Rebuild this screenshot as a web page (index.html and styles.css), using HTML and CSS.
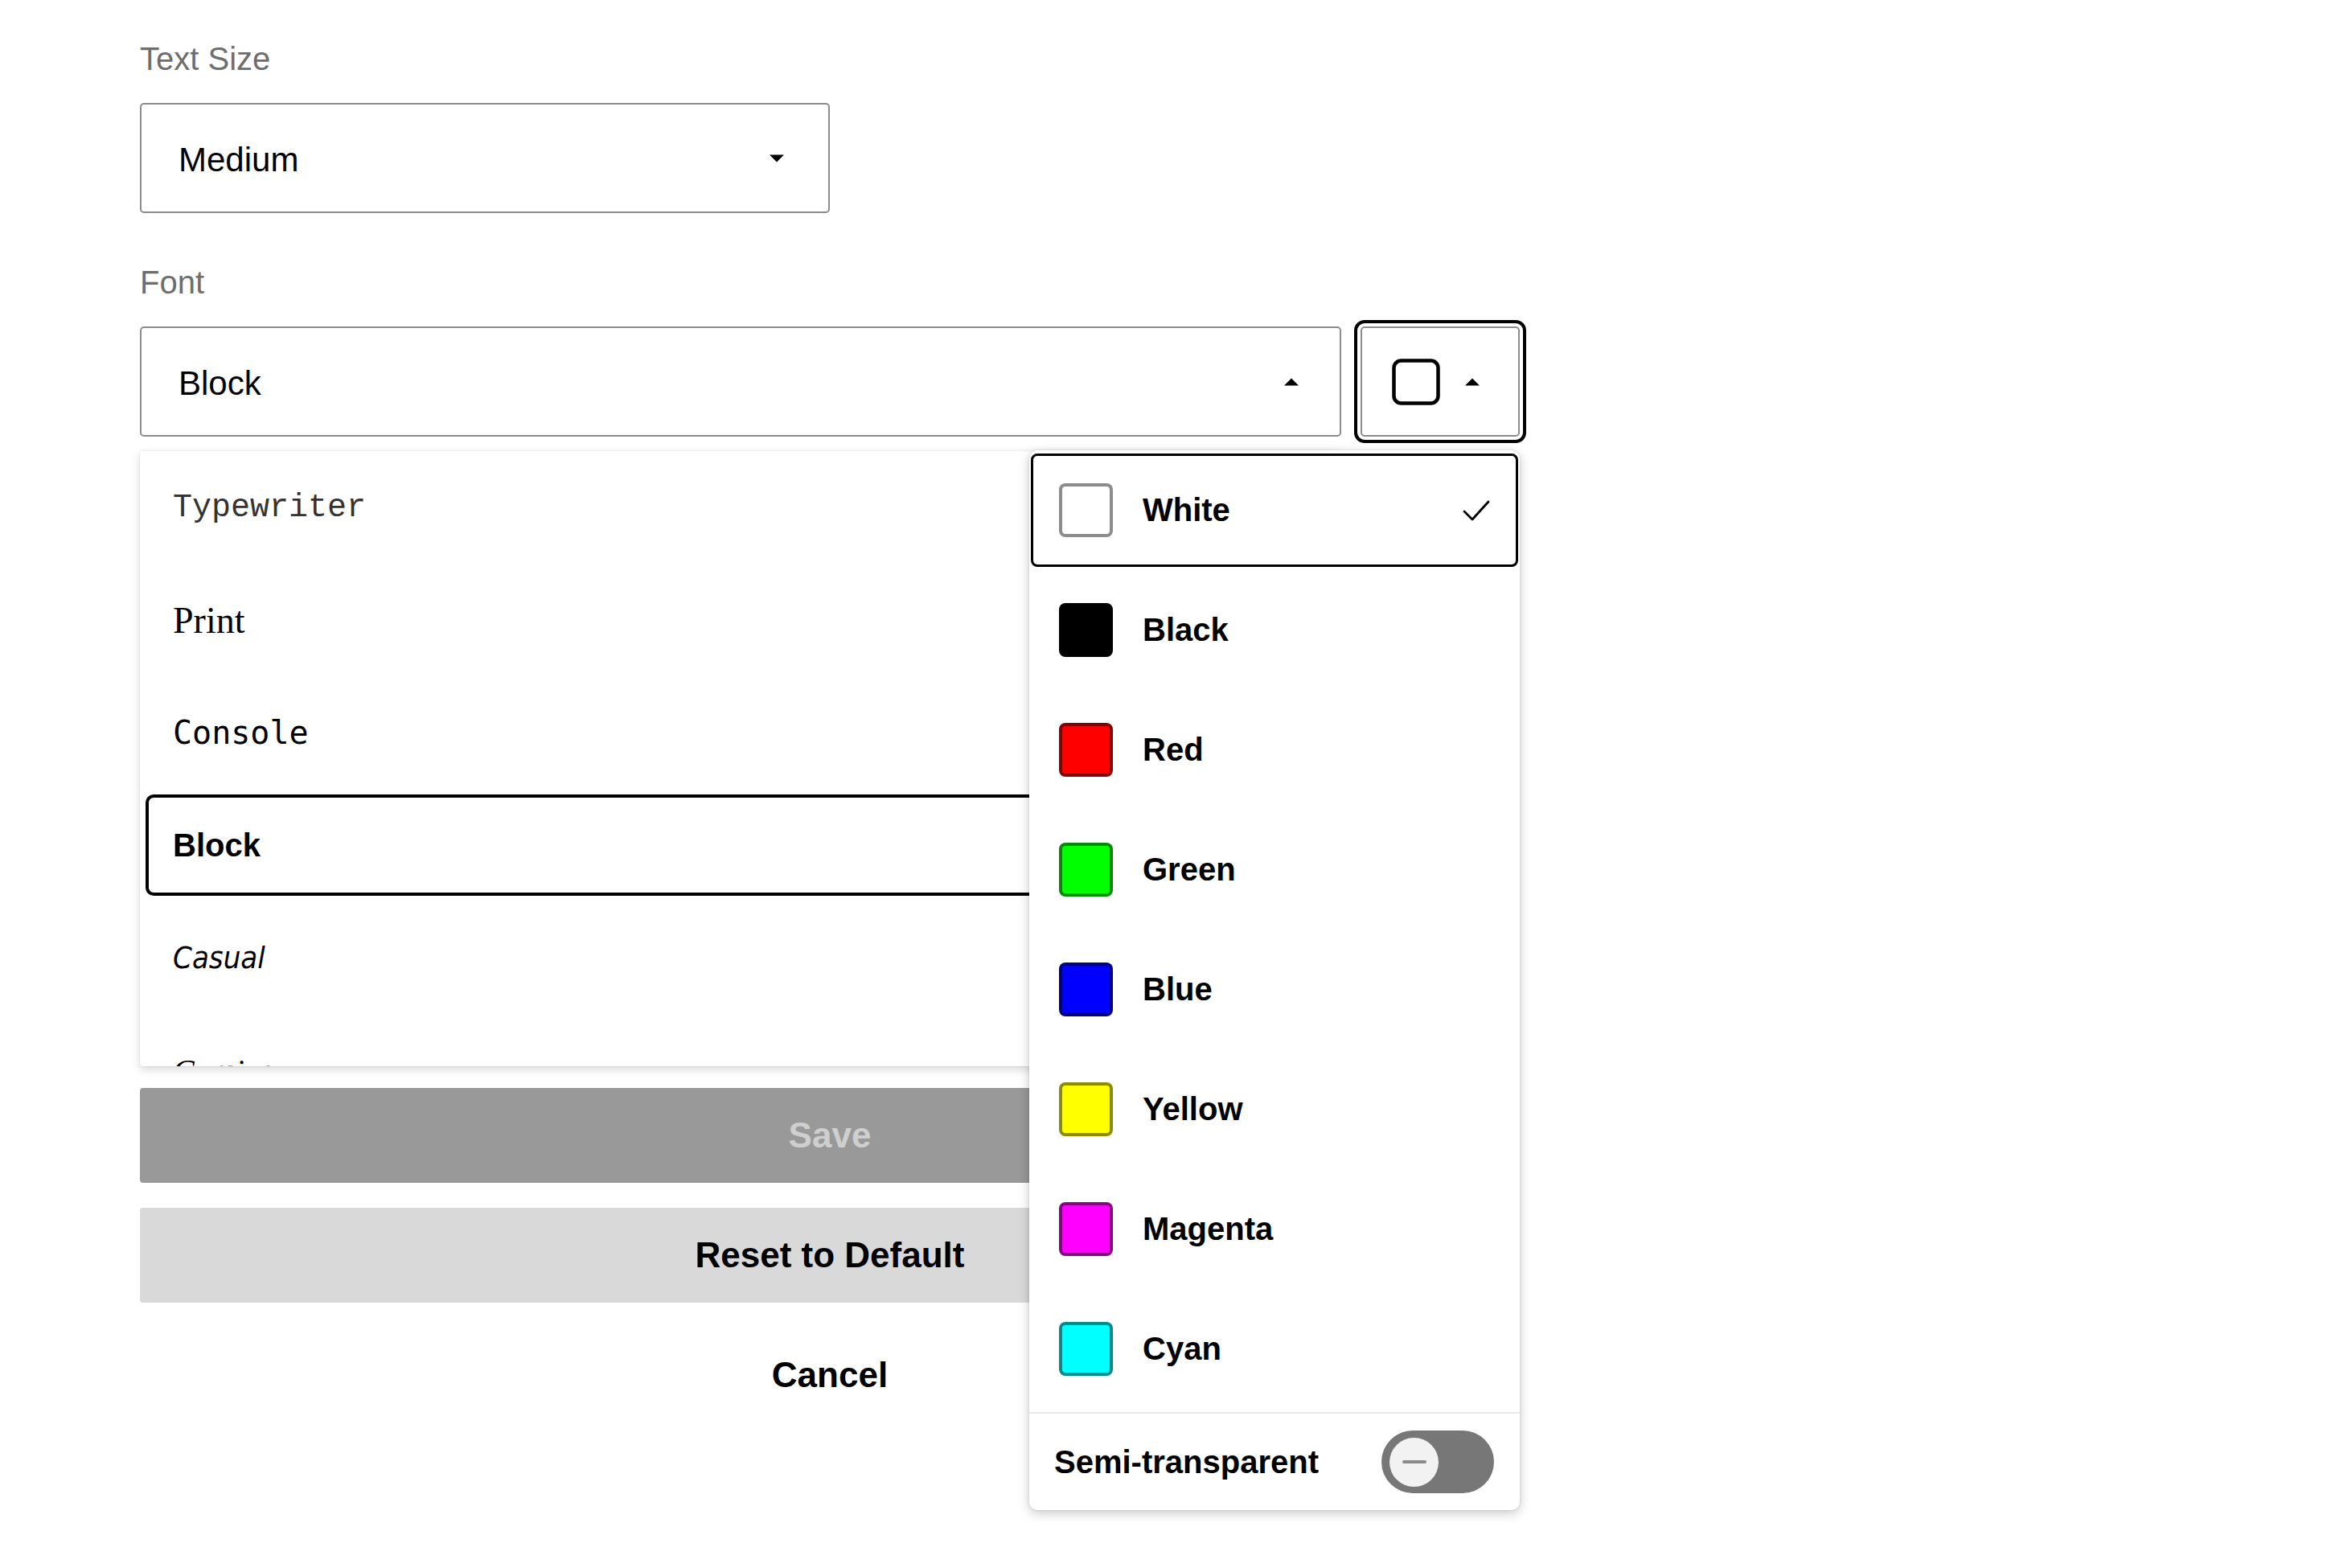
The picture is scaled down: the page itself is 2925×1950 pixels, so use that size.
FILE: index.html
```html
<!DOCTYPE html>
<html lang="en">
<head>
<meta charset="utf-8">
<title>Subtitle Appearance</title>
<link rel="stylesheet" href="styles.css">
</head>
<body>
<main class="settings">
  <div class="field">
    <label class="field-label">Text Size</label>
    <div class="select select-size">
      <span class="select-value">Medium</span>
      <svg class="caret" width="20" height="10" viewBox="0 0 20 10"><path d="M1 0.5h18L10 9.5z"/></svg>
    </div>
  </div>

  <div class="field field-font">
    <label class="field-label">Font</label>
    <div class="font-row">
      <div class="select select-font">
        <span class="select-value">Block</span>
        <svg class="caret" width="20" height="10" viewBox="0 0 20 10"><path d="M1 9.5h18L10 0.5z"/></svg>
      </div>
      <button class="color-trigger" type="button">
        <svg width="60" height="58" viewBox="0 0 60 58"><rect x="2.5" y="2.5" width="55" height="53" rx="9" fill="none" stroke="#000" stroke-width="4.5"/></svg>
        <svg class="caret" width="20" height="10" viewBox="0 0 20 10"><path d="M1 9.5h18L10 0.5z"/></svg>
      </button>

      <div class="color-menu">
        <ul class="color-list">
          <li class="color-option selected">
            <span class="swatch sw-white"></span>
            <span class="color-name">White</span>
            <svg class="check" width="36" height="30" viewBox="0 0 36 30"><polyline points="3,16 13,26 33,4" fill="none" stroke="#000" stroke-width="2.8" stroke-linecap="round" stroke-linejoin="round"/></svg>
          </li>
          <li class="color-option"><span class="swatch sw-black"></span><span class="color-name">Black</span></li>
          <li class="color-option"><span class="swatch sw-red"></span><span class="color-name">Red</span></li>
          <li class="color-option"><span class="swatch sw-green"></span><span class="color-name">Green</span></li>
          <li class="color-option"><span class="swatch sw-blue"></span><span class="color-name">Blue</span></li>
          <li class="color-option"><span class="swatch sw-yellow"></span><span class="color-name">Yellow</span></li>
          <li class="color-option"><span class="swatch sw-magenta"></span><span class="color-name">Magenta</span></li>
          <li class="color-option"><span class="swatch sw-cyan"></span><span class="color-name">Cyan</span></li>
        </ul>
        <div class="color-footer">
          <span class="footer-label">Semi-transparent</span>
          <span class="toggle"><span class="knob"><span class="knob-minus"></span></span></span>
        </div>
      </div>
    </div>

    <ul class="font-menu">
      <li class="font-option f-typewriter">Typewriter</li>
      <li class="font-option f-print">Print</li>
      <li class="font-option f-console">Console</li>
      <li class="font-option f-block selected">Block</li>
      <li class="font-option f-casual">Casual</li>
      <li class="font-option f-cursive">Cursive</li>
    </ul>
  </div>

  <div class="actions">
    <button class="btn btn-save" type="button">Save</button>
    <button class="btn btn-reset" type="button">Reset to Default</button>
    <button class="btn btn-cancel" type="button">Cancel</button>
  </div>
</main>
</body>
</html>
```

FILE: styles.css
```css
html, body {
  margin: 0;
  background: #fff;
}

body {
  min-height: 100vh;
  font-family: "Liberation Sans", Arial, sans-serif;
  color: #000;
}

ul {
  list-style: none;
  margin: 0;
  padding: 0;
}

.settings {
  width: 1716px;
  padding: 50px 0 180px 174px;
}

/* ---------- fields ---------- */
.field-label {
  display: block;
  font-size: 40px;
  line-height: 46px;
  color: #6e6e6e;
  margin-bottom: 32px;
}

.field + .field {
  margin-top: 63px;
}

.select {
  box-sizing: border-box;
  height: 137px;
  border: 2px solid #8c8c8c;
  border-radius: 5px;
  background: #fff;
  display: flex;
  align-items: center;
  justify-content: space-between;
  padding: 0 50px 0 46px;
  font-size: 42px;
}

.select-value {
  position: relative;
  top: 2px;
}

.select-size {
  width: 858px;
  padding-right: 54px;
}

.caret {
  display: block;
  fill: #000;
}

/* ---------- font row ---------- */
.font-row {
  position: relative;
  display: flex;
  gap: 24px;
}

.select-font {
  flex: 1;
}

.color-trigger {
  box-sizing: border-box;
  width: 198px;
  height: 137px;
  border: 2px solid #8c8c8c;
  border-radius: 5px;
  outline: 4px solid #000;
  outline-offset: 4px;
  background: #fff;
  display: flex;
  align-items: center;
  gap: 30px;
  padding: 0 0 0 37px;
  margin: 0;
}

/* ---------- colour menu ---------- */
.color-menu {
  position: absolute;
  top: calc(100% + 17px);
  right: 0;
  width: 610px;
  background: #fff;
  border-radius: 10px;
  box-shadow: 0 4px 14px rgba(0, 0, 0, 0.22), 0 0 3px rgba(0, 0, 0, 0.12);
  z-index: 2;
}

.color-list {
  display: flex;
  flex-direction: column;
  gap: 8px;
  padding: 4px 2px 8px;
}

.color-option {
  box-sizing: border-box;
  height: 141px;
  border: 3px solid transparent;
  border-radius: 8px;
  display: flex;
  align-items: center;
  gap: 37px;
  padding: 0 31px 0 32px;
  font-size: 40px;
  font-weight: bold;
}

.color-option.selected {
  border-color: #000;
}

.check {
  display: block;
  margin-left: auto;
}

.swatch {
  box-sizing: border-box;
  width: 67px;
  height: 67px;
  border: 4px solid rgba(0, 0, 0, 0.45);
  border-radius: 8px;
  flex: none;
}

.sw-white   { background: #fff; }
.sw-black   { background: #000; }
.sw-red     { background: #ff0000; }
.sw-green   { background: #00ff00; }
.sw-blue    { background: #0000ff; }
.sw-yellow  { background: #ffff00; }
.sw-magenta { background: #ff00ff; }
.sw-cyan    { background: #00ffff; }

.color-footer {
  box-sizing: border-box;
  height: 122px;
  border-top: 2px solid #e8e8e8;
  display: flex;
  align-items: center;
  justify-content: space-between;
  padding: 0 32px 0 31px;
}

.footer-label {
  font-size: 40px;
  font-weight: bold;
}

.toggle {
  box-sizing: border-box;
  width: 140px;
  height: 78px;
  border-radius: 39px;
  background: #777;
  display: flex;
  align-items: center;
  padding-left: 10px;
}

.knob {
  width: 61px;
  height: 61px;
  border-radius: 50%;
  background: #f2f2f2;
  display: flex;
  align-items: center;
  justify-content: center;
}

.knob-minus {
  width: 30px;
  height: 4px;
  border-radius: 2px;
  background: #8a8a8a;
}

/* ---------- font menu ---------- */
.font-menu {
  box-sizing: border-box;
  margin-top: 18px;
  width: 1494px;
  height: 765px;
  overflow: hidden;
  background: #fff;
  border-radius: 4px;
  box-shadow: 0 4px 12px rgba(0, 0, 0, 0.16), 0 0 3px rgba(0, 0, 0, 0.08);
  display: flex;
  flex-direction: column;
  gap: 14px;
  padding: 7px;
}

.font-option {
  box-sizing: border-box;
  flex: none;
  height: 126px;
  border: 4px solid transparent;
  border-radius: 10px;
  display: flex;
  align-items: center;
  padding-left: 30px;
  font-size: 40px;
}

.font-option.selected {
  border-color: #000;
}

.f-typewriter {
  font-family: "Liberation Mono", "Courier New", monospace;
  color: #333;
}

.f-print {
  font-family: "Liberation Serif", "Times New Roman", serif;
  font-size: 46px;
}

.f-console {
  font-family: "DejaVu Sans Mono", monospace;
  font-size: 40px;
}

.f-block {
  font-weight: bold;
}

.f-casual {
  font-family: "DejaVu Sans Condensed", "DejaVu Sans", sans-serif;
  font-style: italic;
  font-size: 38px;
}

.f-cursive {
  font-family: "Liberation Serif", serif;
  font-style: italic;
}

/* ---------- actions ---------- */
.actions {
  margin-top: 27px;
  display: flex;
  flex-direction: column;
  gap: 31px;
}

.btn {
  height: 118px;
  width: 100%;
  border: none;
  border-radius: 4px;
  font-family: "Liberation Sans", Arial, sans-serif;
  font-size: 44px;
  font-weight: bold;
  margin: 0;
}

.btn-save {
  background: #999;
  color: #cfcfcf;
}

.btn-reset {
  background: #d9d9d9;
  color: #000;
}

.btn-cancel {
  background: transparent;
  color: #000;
}
```
